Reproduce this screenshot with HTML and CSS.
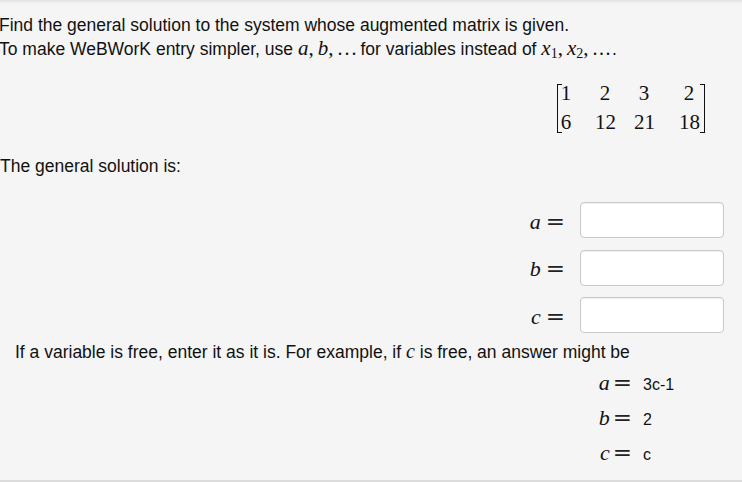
FILE: index.html
```html
<!DOCTYPE html>
<html>
<head>
<meta charset="utf-8">
<link rel="stylesheet" href="styles.css">
</head>
<body>
<div class="page">
  <div class="topshade"></div>
  <p class="intro">Find the general solution to the system whose augmented matrix is given.<br>To make WeBWorK entry simpler, use <span class="mi">a</span><span class="mo">,</span><span class="mi sp">b</span><span class="mo">,</span><span class="dots">...</span>for variables instead of <span class="mi">x</span><sub class="msub">1</sub><span class="mo">,</span><span class="mi sp">x</span><sub class="msub">2</sub><span class="mo">,</span><span class="dots tail">...</span>.</p>

  <div class="matrix">
    <span class="bracket left"></span>
    <div class="mgrid">
      <span class="cell">1</span><span class="cell">2</span><span class="cell">3</span><span class="cell">2</span>
      <span class="cell">6</span><span class="cell">12</span><span class="cell">21</span><span class="cell">18</span>
    </div>
    <span class="bracket right"></span>
  </div>

  <p class="lead">The general solution is:</p>

  <div class="answers">
    <label class="alabel"><span class="mi">a</span><span class="eq">=</span></label><input class="ans" type="text">
    <label class="alabel"><span class="mi">b</span><span class="eq">=</span></label><input class="ans" type="text">
    <label class="alabel"><span class="mi">c</span><span class="eq">=</span></label><input class="ans" type="text">
  </div>

  <p class="note">If a variable is free, enter it as it is. For example, if <span class="mi small">c</span> is free, an answer might be</p>

  <div class="example">
    <span class="elabel"><span class="mi">a</span><span class="eq">=</span></span><span class="evalue">3c-1</span>
    <span class="elabel"><span class="mi">b</span><span class="eq">=</span></span><span class="evalue">2</span>
    <span class="elabel"><span class="mi">c</span><span class="eq">=</span></span><span class="evalue">c</span>
  </div>
  <div class="bottomline"></div>
</div>
</body>
</html>
```
FILE: styles.css
```css
html, body {
  margin: 0;
  padding: 0;
}
body {
  background: #f5f5f5;
  color: #111;
  font-family: "Liberation Sans", Arial, sans-serif;
  font-size: 17.5px;
}
.page {
  width: 742px;
  height: 482px;
  overflow: hidden;
  display: flex;
  flex-direction: column;
}
.topshade {
  height: 4px;
  background: linear-gradient(#e2e2e2, #f5f5f5);
}
.intro {
  margin: 9px 0 0 -1px;
  line-height: 24px;
}
.mi {
  font-family: "Liberation Serif", "Times New Roman", serif;
  font-style: italic;
  font-size: 21px;
  line-height: 1;
}
.mi.sp {
  margin-left: 4px;
}
.mi.small {
  font-size: 20px;
}
.mo {
  font-family: "Liberation Serif", serif;
  font-size: 21px;
  line-height: 1;
}
.msub {
  font-family: "Liberation Serif", serif;
  font-size: 14px;
  line-height: 1;
  vertical-align: -3px;
}
.dots {
  font-family: "Liberation Serif", serif;
  font-size: 20px;
  line-height: 1;
  letter-spacing: 2px;
  margin-left: 4px;
  margin-right: 2px;
}
.dots.tail {
  margin-right: 0;
  letter-spacing: 1.5px;
}
.matrix {
  display: flex;
  margin: 18px 0 0 556px;
  font-family: "Liberation Serif", "Times New Roman", serif;
  font-size: 21px;
}
.bracket {
  width: 4px;
  margin: 5px 0 4px;
  border-top: 1.5px solid #111;
  border-bottom: 1.5px solid #111;
}
.bracket.left {
  border-left: 1.5px solid #111;
  margin-left: 1px;
  margin-right: -6px;
}
.bracket.right {
  border-right: 1.5px solid #111;
  margin-left: 1px;
}
.mgrid {
  display: grid;
  grid-template-columns: 20px 39px 39px 45px;
  justify-items: end;
  grid-auto-rows: 29px;
  line-height: 29px;
}
.cell {
  width: 20px;
  text-align: center;
}
.lead {
  margin: 17px 0 0 0;
  line-height: 24px;
}
.answers {
  display: grid;
  grid-template-columns: 565px 144px;
  column-gap: 15px;
  row-gap: 11.5px;
  margin-top: 24px;
  align-items: center;
}
.alabel {
  display: flex;
  justify-content: flex-end;
  align-items: baseline;
  gap: 5px;
  padding-top: 2px;
}
.alabel .mi, .elabel .mi {
  font-size: 22px;
}
.eq {
  font-family: "DejaVu Serif", serif;
  font-size: 23px;
  line-height: 1;
  color: #222;
}
.ans {
  box-sizing: border-box;
  height: 36px;
  width: 144px;
  margin: 0;
  background: #fff;
  border: 1px solid #c9c9c9;
  border-radius: 4px;
  box-shadow: inset 0 1px 1px rgba(0,0,0,0.06);
}
.note {
  margin: 7px 0 0 15px;
  line-height: 24px;
}
.example {
  display: grid;
  grid-template-columns: 632px auto;
  column-gap: 11px;
  grid-auto-rows: 35px;
  align-items: baseline;
  margin-top: 3px;
}
.elabel {
  display: flex;
  justify-content: flex-end;
  align-items: baseline;
  gap: 3px;
}
.evalue {
  font-size: 16px;
  line-height: 35px;
}
.bottomline {
  margin-top: auto;
  height: 2px;
  background: #dcdcdc;
}
```
